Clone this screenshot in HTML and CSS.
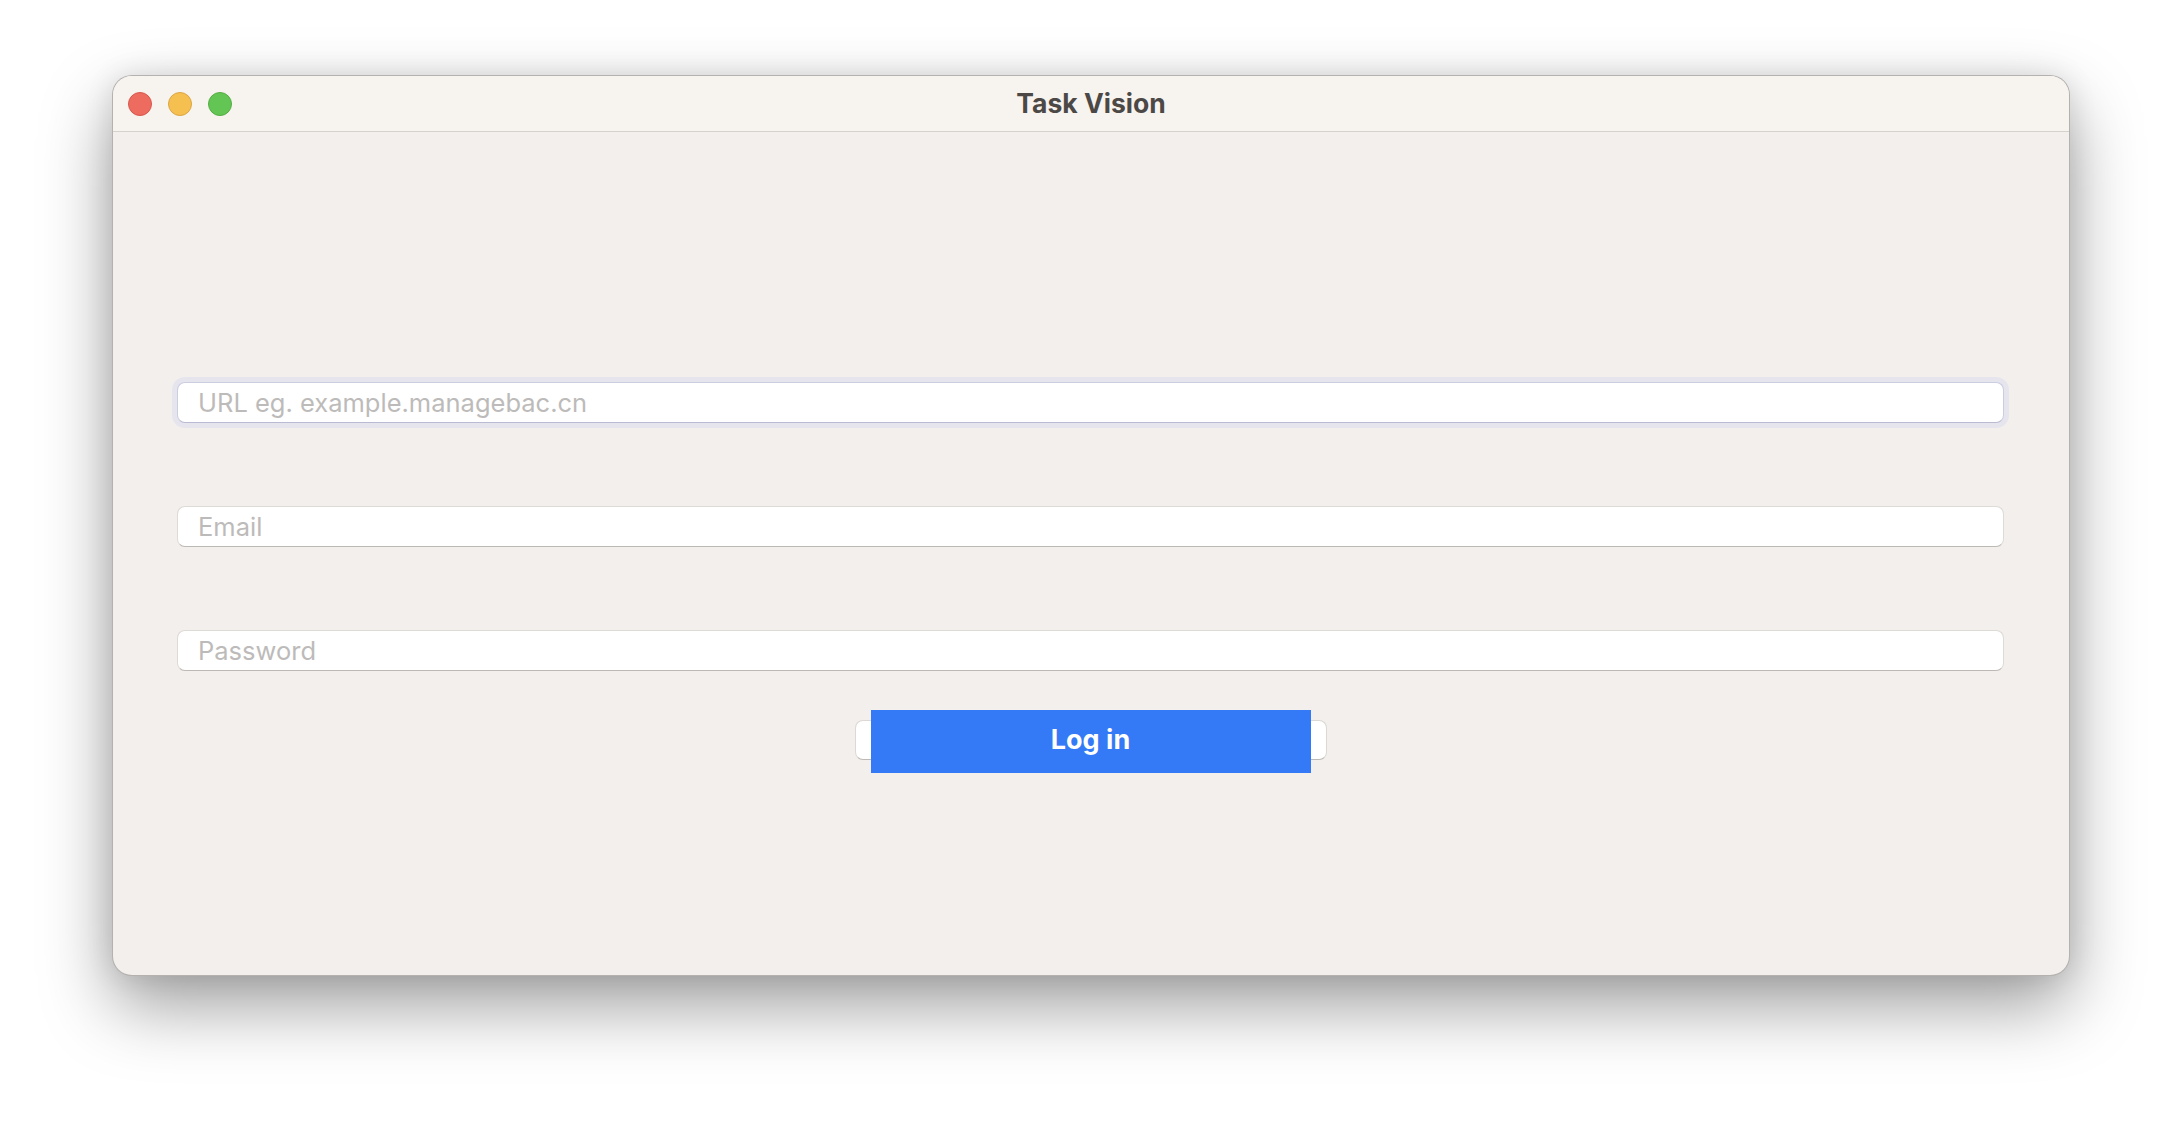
FILE: index.html
```html
<!DOCTYPE html>
<html lang="en">
<head>
<meta charset="utf-8">
<title>Task Vision</title>
<link rel="stylesheet" href="styles.css">
</head>
<body>
<div class="window">
  <header class="titlebar">
    <div class="lights">
      <span class="light red"></span>
      <span class="light yellow"></span>
      <span class="light green"></span>
    </div>
    <div class="title">Task Vision</div>
  </header>
  <main class="content">
    <input class="field focused" type="text" placeholder="URL eg. example.managebac.cn">
    <input class="field" type="text" placeholder="Email">
    <input class="field" type="password" placeholder="Password">
    <div class="actions">
      <button class="login" type="button"><span class="login-face">Log in</span></button>
    </div>
  </main>
</div>
</body>
</html>
```

FILE: styles.css
```css
html, body {
  margin: 0;
  padding: 0;
}
body {
  background: #ffffff;
  width: 2182px;
  height: 1124px;
  box-sizing: border-box;
  padding: 75px 0 0 112px;
  font-family: Inter, "Noto Sans", "Liberation Sans", sans-serif;
  overflow: hidden;
}
.window {
  width: 1958px;
  height: 901px;
  box-sizing: border-box;
  border: 1px solid rgba(0, 0, 0, 0.26);
  border-radius: 20px;
  background: #f3efec;
  overflow: hidden;
  box-shadow: 0 30px 70px rgba(0, 0, 0, 0.38), 0 0 28px rgba(0, 0, 0, 0.1);
  display: flex;
  flex-direction: column;
}
.titlebar {
  height: 55px;
  flex: 0 0 55px;
  background: #f7f3ef;
  border-bottom: 1px solid #d5d1cd;
  display: flex;
  align-items: center;
  position: relative;
}
.lights {
  display: flex;
  gap: 16px;
  padding-left: 15px;
  position: absolute;
  left: 0;
  top: 16px;
}
.light {
  width: 24px;
  height: 24px;
  box-sizing: border-box;
  border-radius: 50%;
  display: block;
}
.red { background: #ee6b60; border: 1px solid #d8574c; }
.yellow { background: #f6c050; border: 1px solid #dba544; }
.green { background: #62c554; border: 1px solid #55ad45; }
.title {
  flex: 1;
  text-align: center;
  font-size: 26.5px;
  font-weight: 700;
  color: #4b4846;
  padding-bottom: 1px;
}
.content {
  flex: 1;
  display: flex;
  flex-direction: column;
  padding: 250px 65px 0 64px;
}
.field {
  display: block;
  width: 100%;
  height: 41px;
  box-sizing: border-box;
  margin: 0 0 83px 0;
  padding: 0 20px;
  border: 1px solid #dedad6;
  border-bottom-color: #bcb8b4;
  border-radius: 8px;
  background: #ffffff;
  font-family: Inter, "Noto Sans", "Liberation Sans", sans-serif;
  font-size: 25.5px;
  color: #333;
  outline: none;
}
.field::placeholder {
  color: #bdbbba;
}
.field.focused {
  border-color: #cbcde0;
  border-bottom-color: #b9bbd2;
  box-shadow: 0 0 0 5px #e6e5ee;
}
.content .field:nth-of-type(3) {
  margin-bottom: 0;
}
.actions {
  display: flex;
  justify-content: center;
  padding-top: 49px;
}
.login {
  position: relative;
  width: 472px;
  height: 40px;
  padding: 0;
  border: 1px solid #dcd8d4;
  border-bottom-color: #bdb9b5;
  border-radius: 8px;
  background: #ffffff;
  cursor: pointer;
}
.login-face {
  position: absolute;
  left: 15px;
  right: 15px;
  top: -11px;
  bottom: -14px;
  padding-bottom: 4px;
  box-sizing: border-box;
  background: #3479f6;
  color: #ffffff;
  font-family: Inter, "Noto Sans", "Liberation Sans", sans-serif;
  font-size: 27px;
  font-weight: 700;
  display: flex;
  align-items: center;
  justify-content: center;
}
```
